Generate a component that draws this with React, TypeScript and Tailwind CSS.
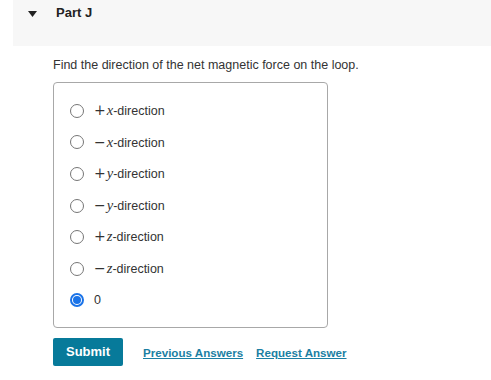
const options = [
  { sign: "+", v: "x" },
  { sign: "−", v: "x" },
  { sign: "+", v: "y" },
  { sign: "−", v: "y" },
  { sign: "+", v: "z" },
  { sign: "−", v: "z" },
];

function Radio({ checked }: { checked?: boolean }) {
  return checked ? (
    <span className="flex h-[14px] w-[14px] items-center justify-center rounded-full border-2 border-[#1a73e8]">
      <span className="h-[8px] w-[8px] rounded-full bg-[#1a73e8]" />
    </span>
  ) : (
    <span className="h-[14px] w-[14px] rounded-full border border-[#767676] bg-white" />
  );
}

export default function App() {
  return (
    <div className="h-[380px] w-[491px] bg-white text-[#333] font-['Liberation_Sans',Arial,sans-serif]">
      <div className="ml-[13px] flex h-[46px] items-start bg-[#f7f7f7] pt-[3px]">
        <svg width="9" height="6" viewBox="0 0 9 6" className="ml-[15px] mt-[8px]">
          <path d="M0 0h9L4.5 6z" fill="#222" />
        </svg>
        <span className="ml-[19px] text-[13px] font-bold text-[#222]">Part J</span>
      </div>

      <div className="pl-[53px]">
        <p className="mt-[12px] text-[12.5px] leading-[15px]">Find the direction of the net magnetic force on the loop.</p>

        <div className="mt-[9px] h-[246px] w-[275px] rounded-[4px] border border-[#a8a8a8] pl-[16px] pt-[12px]">
          {options.map((o, i) => (
            <label key={i} className="flex h-[31.6px] items-center">
              <Radio />
              <span className="ml-[10px] text-[12.5px]">
                <span className="font-['DejaVu_Serif',serif] text-[14px]">{o.sign}</span>
                <span className="ml-[1px] font-['Liberation_Serif',serif] italic text-[14.5px]">{o.v}</span>
                -direction
              </span>
            </label>
          ))}
          <label className="flex h-[31.6px] items-center">
            <Radio checked />
            <span className="ml-[10px] text-[12.5px]">0</span>
          </label>
        </div>

        <div className="mt-[10px] flex items-center">
          <button className="h-[28px] w-[70px] rounded-[2px] bg-[#077a9a] text-[13px] font-bold text-white">Submit</button>
          <a className="ml-[20px] pt-[1px] text-[11.6px] font-bold text-[#1b7fa3] underline">Previous Answers</a>
          <a className="ml-[13px] pt-[1px] text-[11.6px] font-bold text-[#1b7fa3] underline">Request Answer</a>
        </div>
      </div>
    </div>
  );
}
